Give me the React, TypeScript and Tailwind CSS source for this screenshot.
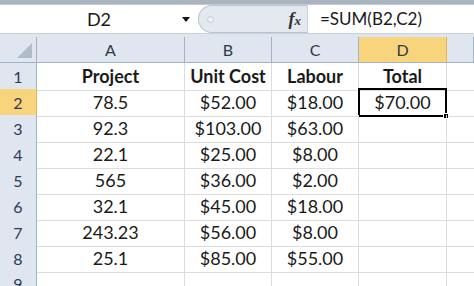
const rows = [
  ["Project", "Unit Cost", "Labour", "Total"],
  ["78.5", "$52.00", "$18.00", "$70.00"],
  ["92.3", "$103.00", "$63.00", ""],
  ["22.1", "$25.00", "$8.00", ""],
  ["565", "$36.00", "$2.00", ""],
  ["32.1", "$45.00", "$18.00", ""],
  ["243.23", "$56.00", "$8.00", ""],
  ["25.1", "$85.00", "$55.00", ""],
  ["", "", "", ""],
];

const cols = ["A", "B", "C", "D", ""];
const grid = "grid grid-cols-[37px_148px_87px_87px_88px_1fr]";

export default function App() {
  return (
    <div className="h-[286px] w-[474px] overflow-hidden bg-white text-[#1a1a1a]" style={{ fontFamily: "Lato, 'Open Sans', sans-serif" }}>
      <div className="h-[5px] border-b border-[#c5ccd6] bg-[#aab3c0]" />

      {/* name box + formula bar */}
      <div className="flex h-[28px] items-stretch bg-white">
        <div className="relative flex w-[198px] items-center justify-center text-[18px]">
          D2
          <span className="absolute right-[8px] top-[12px] h-0 w-0 border-x-[4px] border-t-[5px] border-x-transparent border-t-[#111]" />
        </div>
        <div className="flex w-[109px] items-center justify-between rounded-l-full border border-r-0 border-[#b9c3cf] bg-[#e4e9ef] pl-[8px] pr-[6px]">
          <span className="h-[7px] w-[7px] rounded-full border border-[#c3ccd6] bg-[#eef1f5]" />
          <span className="text-[18px] font-bold italic leading-none text-[#333]" style={{ fontFamily: "'Liberation Serif', serif" }}>
            f<span className="text-[13px]">x</span>
          </span>
        </div>
        <div className="flex flex-1 items-center border-l border-[#c9d1db] pl-[12px] text-[17px]">=SUM(B2,C2)</div>
      </div>
      <div className="h-[4px] border-t border-[#c9d1db] bg-[#dde5ef]" />

      {/* column headers */}
      <div className={`${grid} h-[26px] border-b border-[#9fb3cb]`}>
        <div className="relative border-r border-[#9fb3cb] bg-[#dfe6ef]">
          <span className="absolute bottom-[4px] right-[4px] h-0 w-0 border-b-[15px] border-l-[15px] border-b-[#b2bcc8] border-l-transparent" />
        </div>
        {cols.map((c, i) => (
          <div
            key={i}
            className={`flex items-center justify-center border-r text-[16px] text-[#2f3a48] ${
              c === "D" ? "border-[#e2b652] bg-[#f8d57c]" : "border-[#9fb3cb] bg-[#dfe6ef]"
            }`}
          >
            {c}
          </div>
        ))}
      </div>

      {rows.map((r, ri) => (
        <div key={ri} className={`${grid} h-[26px]`}>
          <div
            className={`flex items-center justify-center border-b border-r text-[16px] text-[#2f3a55] ${
              ri === 1 ? "border-[#e2b652] bg-[#f8d57c]" : "border-[#9fb3cb] bg-[#dfe6ef]"
            }`}
          >
            {ri + 1}
          </div>
          {r.map((v, ci) => (
            <div
              key={ci}
              className={`relative flex items-center justify-center border-b border-r border-[#dcdcdc] text-[18px] ${
                ri === 0 ? "font-bold" : ""
              }`}
            >
              {v}
              {ri === 1 && ci === 3 && (
                <span className="absolute -left-px -top-px bottom-[-1px] right-[-1px] border-2 border-black">
                  <span className="absolute -bottom-[4px] -right-[4px] h-[6px] w-[6px] border border-white bg-black" />
                </span>
              )}
            </div>
          ))}
          <div className="border-b border-[#dcdcdc]" />
        </div>
      ))}
    </div>
  );
}
